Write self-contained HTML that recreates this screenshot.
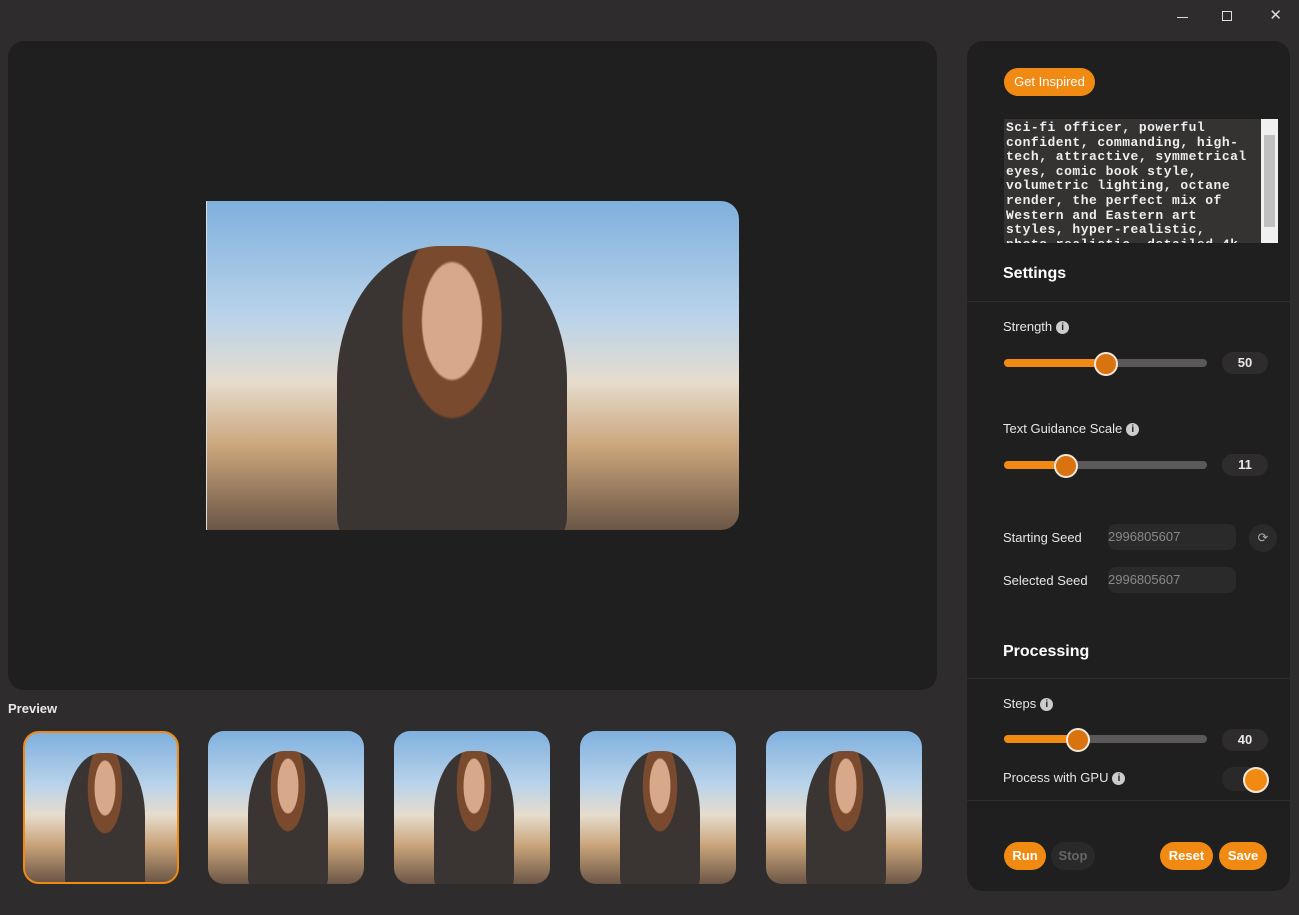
<!DOCTYPE html>
<html><head><style>
*{margin:0;padding:0;box-sizing:border-box}
body{width:1299px;height:915px;background:#2e2c2c;font-family:"Liberation Sans",sans-serif;color:#e8e8e8;position:relative;overflow:hidden}
.a{position:absolute}
.panel{background:#201f1f;border-radius:16px}
.img{background:linear-gradient(180deg,#7fb0de 0%,#b9d3ea 35%,#e6dccd 55%,#c9a47a 75%,#6b5646 100%);overflow:hidden}
.fig{position:absolute;border-radius:45% 45% 10% 10%;background:radial-gradient(ellipse at 50% 25%,#d8a88a 0 18%,#7a4a2e 19% 30%,#3a3432 31% 100%)}
.lbl{font-size:13px;color:#e6e6e6}
.track{position:absolute;height:8px;border-radius:4px;background:#5a5858}
.fill{position:absolute;height:8px;border-radius:4px;background:#f08a12}
.knob{position:absolute;width:24px;height:24px;border-radius:50%;background:#d9730f;border:2px solid #f4e7dc}
.val{position:absolute;width:46px;height:22px;border-radius:11px;background:#2e2c2c;font-size:13px;font-weight:bold;text-align:center;line-height:22px}
.i{display:inline-block;width:13px;height:13px;border-radius:50%;background:#ccc;color:#222;font-size:10px;font-weight:bold;text-align:center;line-height:13px;vertical-align:1px;margin-left:4px}
.btn{position:absolute;height:28px;border-radius:14px;background:#f08a12;color:#fff;font-size:13px;font-weight:bold;text-align:center;line-height:28px}
.h{position:absolute;font-size:16px;font-weight:bold;color:#fff}
.hr{position:absolute;left:967px;width:323px;height:1px;background:#2e2c2c}
.seed{position:absolute;width:128px;height:26px;border-radius:8px;background:#2b2a2a;color:#888;font-size:13px;line-height:26px}
.th{position:absolute;top:731px;width:156px;height:153px;border-radius:16px}
</style></head><body>
<div class="a" style="right:111px;top:17px;width:11px;height:1px;background:#ddd"></div>
<div class="a" style="right:67px;top:11px;width:10px;height:10px;border:1px solid #ddd"></div>
<div class="a" style="right:17px;top:6px;font-size:15px;color:#ddd">✕</div>

<div class="a panel" style="left:8px;top:41px;width:929px;height:649px"></div>
<div class="a img" style="left:206px;top:201px;width:533px;height:329px;border-radius:0 18px 18px 0;border-left:1px solid #ddd">
<div class="fig" style="left:130px;top:45px;width:230px;height:300px"></div>
</div>

<div class="a" style="left:8px;top:701px;font-size:13px;font-weight:bold">Preview</div>
<div class="th img" style="left:23px;border:2px solid #f08a12"><div class="fig" style="left:40px;top:20px;width:80px;height:140px"></div></div>
<div class="th img" style="left:208px"><div class="fig" style="left:40px;top:20px;width:80px;height:140px"></div></div>
<div class="th img" style="left:394px"><div class="fig" style="left:40px;top:20px;width:80px;height:140px"></div></div>
<div class="th img" style="left:580px"><div class="fig" style="left:40px;top:20px;width:80px;height:140px"></div></div>
<div class="th img" style="left:766px"><div class="fig" style="left:40px;top:20px;width:80px;height:140px"></div></div>

<div class="a panel" style="left:967px;top:41px;width:323px;height:850px"></div>
<div class="btn" style="left:1004px;top:68px;width:91px;font-weight:normal">Get Inspired</div>
<div class="a" style="left:1004px;top:119px;width:274px;height:124px;background:#353232;overflow:hidden">
<div style="font-family:'Liberation Mono',monospace;font-size:13px;letter-spacing:0.5px;line-height:14.6px;color:#eee;padding:2px 0 0 2px;white-space:pre;font-weight:bold">Sci-fi officer, powerful
confident, commanding, high-
tech, attractive, symmetrical
eyes, comic book style,
volumetric lighting, octane
render, the perfect mix of
Western and Eastern art
styles, hyper-realistic,
photo-realistic, detailed 4k</div>
<div class="a" style="right:0;top:0;width:17px;height:124px;background:#f0f0f0"><div style="margin:16px 3px;height:92px;background:#c0c0c0"></div></div>
</div>
<div class="h" style="left:1003px;top:265px">Settings</div>
<div class="hr" style="top:301px"></div>
<div class="a lbl" style="left:1003px;top:319px">Strength<span class="i">i</span></div>
<div class="track" style="left:1004px;top:359px;width:203px"></div><div class="fill" style="left:1004px;top:359px;width:102px"></div><div class="knob" style="left:1094px;top:352px"></div>
<div class="val" style="left:1222px;top:352px">50</div>
<div class="a lbl" style="left:1003px;top:421px">Text Guidance Scale<span class="i">i</span></div>
<div class="track" style="left:1004px;top:461px;width:203px"></div><div class="fill" style="left:1004px;top:461px;width:62px"></div><div class="knob" style="left:1054px;top:454px"></div>
<div class="val" style="left:1222px;top:454px">11</div>
<div class="a lbl" style="left:1003px;top:530px">Starting Seed</div>
<div class="seed" style="left:1108px;top:524px">2996805607</div>
<div class="a" style="left:1249px;top:524px;width:28px;height:28px;border-radius:50%;background:#2b2a2a;color:#aaa;font-size:13px;text-align:center;line-height:28px">⟳</div>
<div class="a lbl" style="left:1003px;top:573px">Selected Seed</div>
<div class="seed" style="left:1108px;top:567px">2996805607</div>
<div class="h" style="left:1003px;top:643px">Processing</div>
<div class="hr" style="top:678px"></div>
<div class="a lbl" style="left:1003px;top:696px">Steps<span class="i">i</span></div>
<div class="track" style="left:1004px;top:735px;width:203px"></div><div class="fill" style="left:1004px;top:735px;width:74px"></div><div class="knob" style="left:1066px;top:728px"></div>
<div class="val" style="left:1222px;top:729px">40</div>
<div class="a lbl" style="left:1003px;top:770px">Process with GPU<span class="i">i</span></div>
<div class="a" style="left:1222px;top:767px;width:46px;height:24px;border-radius:12px;background:#2a2929"></div>
<div class="a" style="left:1243px;top:767px;width:26px;height:26px;border-radius:50%;background:#f08a12;border:2px solid #f4e7dc"></div>
<div class="hr" style="top:800px"></div>
<div class="btn" style="left:1004px;top:842px;width:42px">Run</div>
<div class="btn" style="left:1051px;top:842px;width:44px;background:#2a2929;color:#666">Stop</div>
<div class="btn" style="left:1160px;top:842px;width:53px">Reset</div>
<div class="btn" style="left:1219px;top:842px;width:48px">Save</div>
</body></html>
